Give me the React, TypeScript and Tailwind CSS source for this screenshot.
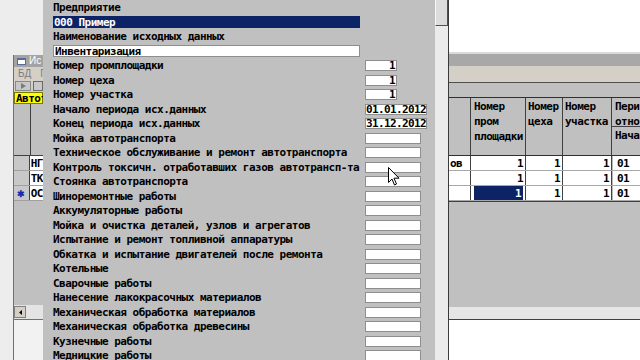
import React from "react";

const mono =
  "font-['DejaVu_Sans_Mono',monospace] font-bold text-[11px] tracking-[-0.5px] leading-none";

type Row = { label: string; value?: string; kind: "s" | "d" | "e" };

const rows: Row[] = [
  { label: "Номер промплощадки", value: "1", kind: "s" },
  { label: "Номер цеха", value: "1", kind: "s" },
  { label: "Номер участка", value: "1", kind: "s" },
  { label: "Начало периода исх.данных", value: "01.01.2012", kind: "d" },
  { label: "Конец периода исх.данных", value: "31.12.2012", kind: "d" },
  { label: "Мойка автотранспорта", kind: "e" },
  { label: "Техническое обслуживание и ремонт автотранспорта", kind: "e" },
  { label: "Контроль токсичн. отработавших газов автотрансп-та", kind: "e" },
  { label: "Стоянка автотранспорта", kind: "e" },
  { label: "Шиноремонтные работы", kind: "e" },
  { label: "Аккумуляторные работы", kind: "e" },
  { label: "Мойка и очистка деталей, узлов и агрегатов", kind: "e" },
  { label: "Испытание и ремонт топливной аппаратуры", kind: "e" },
  { label: "Обкатка и испытание двигателей после ремонта", kind: "e" },
  { label: "Котельные", kind: "e" },
  { label: "Сварочные работы", kind: "e" },
  { label: "Нанесение лакокрасочных материалов", kind: "e" },
  { label: "Механическая обработка материалов", kind: "e" },
  { label: "Механическая обработка древесины", kind: "e" },
  { label: "Кузнечные работы", kind: "e" },
  { label: "Медницкие работы", kind: "e" },
];

function Field({ row }: { row: Row }) {
  const w = row.kind === "s" ? "w-[32px]" : row.kind === "d" ? "w-[62px]" : "w-[56px]";
  return (
    <div
      className={`${w} h-[11px] shrink-0 bg-white border border-[#8e8e8e] flex items-center ${
        row.kind === "d" ? "justify-center tracking-[-0.6px]" : "justify-end pr-[1px]"
      }`}
    >
      {row.value}
    </div>
  );
}

function LeftWindow() {
  return (
    <div className="w-[43px] shrink-0 bg-[#ededed] flex flex-col">
      <div className="h-[55px] shrink-0" />
      <div className="ml-[13px] flex-1 flex flex-col border-l border-[#707070] overflow-hidden">
        <div className="h-[12px] shrink-0 bg-[#a3a3a3] flex items-center gap-[3px] pl-[3px]">
          <div className="w-[9px] h-[7px] shrink-0 bg-white border border-[#5a6a9a] border-t-2" />
          <span className="text-white text-[10px] font-['Liberation_Sans',sans-serif] leading-none">
            Ис
          </span>
        </div>
        <div className="h-[13px] shrink-0 bg-[#d4d0c8] flex items-center gap-[9px] pl-[4px] text-[#7c7c7c] text-[10px] font-['Liberation_Sans',sans-serif] leading-none">
          <span>БД</span>
          <span>П</span>
        </div>
        <div className="h-[12px] shrink-0 bg-[#d4d0c8] flex items-center gap-[2px] pl-[1px]">
          <div className="w-[16px] h-[10px] bg-[#c8c8c8] border border-[#8a8a8a] flex items-center justify-center">
            <svg width="5" height="6" viewBox="0 0 5 6">
              <path d="M0 0 L5 3 L0 6 Z" fill="#7a7a7a" />
            </svg>
          </div>
          <div className="w-[10px] h-[10px] bg-[#c8c8c8] border border-[#6a6a6a]" />
        </div>
        <div
          className={`h-[12px] shrink-0 bg-[#ffff00] border border-[#7a7a00] flex items-center pl-[1px] whitespace-nowrap ${mono}`}
        >
          Автот
        </div>
        <div className="flex-1 bg-[#c0c0c0] flex flex-col">
          <div className="h-[52px] shrink-0 flex border-b border-[#404040]">
            <div className="w-[17px] border-r border-[#404040]" />
          </div>
          {["НГ", "ТК", "ОС"].map((t, i) => (
            <div key={t} className="h-[15px] shrink-0 flex border-b border-[#a0a0a0]">
              <div className="w-[17px] bg-[#c8c8c8] border-r border-[#404040] flex items-center justify-center">
                {i === 2 && <span className="text-[#1a2ab0] text-[9px] leading-none font-bold">✱</span>}
              </div>
              <div className={`flex-1 bg-white flex items-center pl-[1px] whitespace-nowrap ${mono}`}>{t}</div>
            </div>
          ))}
          <div className="flex-1" />
          <div className="h-[14px] shrink-0 bg-[#e4e4e4] flex items-center">
            <div className="w-[12px] h-[12px] bg-[#d4d0c8] border border-[#808080] flex items-center justify-center">
              <svg width="3" height="5" viewBox="0 0 3 5">
                <path d="M3 0 L0 2.5 L3 5 Z" fill="#000" />
              </svg>
            </div>
          </div>
        </div>
        <div className="h-[41px] shrink-0 bg-[#f2f2f2] border-t border-[#707070]" />
      </div>
    </div>
  );
}

function Panel() {
  return (
    <div className={`w-[392px] shrink-0 bg-[#c0c0c0] pl-[10px] flex flex-col text-black ${mono}`}>
      <div className="h-[15px] shrink-0 flex items-center">Предприятие</div>
      <div className="mt-[1px] h-[12px] shrink-0 w-[307px] bg-[#0c2466] text-white flex items-center pl-[1px]">
        000 Пример
      </div>
      <div className="h-[17px] shrink-0 flex items-center">Наименование исходных данных</div>
      <div className="h-[12px] shrink-0 w-[307px] bg-white border border-[#8e8e8e] flex items-center pl-[1px]">
        Инвентаризация
      </div>
      <div className="h-[1.5px] shrink-0" />
      {rows.map((r) => (
        <div key={r.label} className="h-[14.5px] shrink-0 flex items-center">
          <div className="w-[312px] shrink-0 whitespace-nowrap">{r.label}</div>
          <Field row={r} />
        </div>
      ))}
    </div>
  );
}

function Scrollbar() {
  return (
    <div className="w-[13px] shrink-0 bg-[#ebebeb] flex flex-col">
      <div className="h-[26px] shrink-0 bg-[#dcdcdc] border-r border-b border-[#505050] border-l border-l-[#f8f8f8]" />
    </div>
  );
}

const cols = ["w-[22px]", "w-[55px]", "w-[37px]", "w-[49px]"];

function RightWindow() {
  const data = [
    ["ов", "1", "1", "1", "01"],
    ["", "1", "1", "1", "01"],
    ["", "1", "1", "1", "01"],
  ];
  return (
    <div className={`flex-1 flex flex-col border-l border-[#3a3a3a] ${mono}`}>
      <div className="h-[52px] shrink-0 bg-white" />
      <div className="h-[2px] shrink-0 bg-[#dadada]" />
      <div className="h-[12px] shrink-0 bg-[#a8a8a8]" />
      <div className="h-[16px] shrink-0 bg-[#d4d0c8]" />
      <div className="h-[1px] shrink-0 bg-[#505050]" />
      <div className="h-[14px] shrink-0 bg-[#c0c0c0]" />
      <div className="h-[59px] shrink-0 bg-[#c0c0c0] flex border-y border-[#303030]">
        <div className={`${cols[0]} shrink-0 border-r border-[#404040]`} />
        <div className={`${cols[1]} shrink-0 border-r border-[#404040] pl-[3px] pt-[3px] flex flex-col gap-[4px]`}>
          <span>Номер</span>
          <span>пром</span>
          <span>площадки</span>
        </div>
        <div className={`${cols[2]} shrink-0 border-r border-[#404040] pl-[2px] pt-[3px] flex flex-col gap-[4px]`}>
          <span>Номер</span>
          <span>цеха</span>
        </div>
        <div className={`${cols[3]} shrink-0 border-r border-[#404040] pl-[2px] pt-[3px] flex flex-col gap-[4px]`}>
          <span>Номер</span>
          <span>участка</span>
        </div>
        <div className="flex-1 flex flex-col whitespace-nowrap overflow-hidden">
          <div className="h-[29px] border-b border-[#404040] pl-[3px] pt-[3px] flex flex-col gap-[4px]">
            <span>Пери</span>
            <span>отно</span>
          </div>
          <div className="pl-[3px] pt-[3px]">Нача</div>
        </div>
      </div>
      {data.map((r, i) => (
        <div key={i} className="h-[15px] shrink-0 bg-[#b8b8b8] flex border-b border-[#a8a8a8]">
          {r.map((v, j) => {
            const sel = i === 2 && j === 1;
            if (j === 4)
              return (
                <div key={j} className="flex-1 bg-white ml-[1px] flex items-center pl-[4px] overflow-hidden">
                  {v}
                </div>
              );
            return (
              <div key={j} className={`${cols[j]} shrink-0 border-r border-[#404040] bg-white flex items-center`}>
                {j === 0 ? (
                  <span className="pl-[1px]">{v}</span>
                ) : (
                  <div
                    className={`flex-1 h-full flex items-center justify-end pr-[2px] ${
                      sel ? "bg-[#0c2466] text-white m-[1px] ml-[3px] mr-[2px]" : ""
                    }`}
                  >
                    {v}
                  </div>
                )}
              </div>
            );
          })}
        </div>
      ))}
      <div className="flex-1 bg-[#c0c0c0] border-t border-[#404040]" />
      <div className="h-[12px] shrink-0 bg-[#e6e6e6]" />
      <div className="h-[41px] shrink-0 bg-white border-t border-[#404040]" />
    </div>
  );
}

export default function App() {
  return (
    <div className="relative w-[640px] h-[360px] overflow-hidden flex bg-[#ededed]">
      <LeftWindow />
      <Panel />
      <Scrollbar />
      <RightWindow />
      <svg className="absolute left-[388px] top-[167px]" width="12" height="19" viewBox="0 0 12 19">
        <path
          d="M0.5 0.5 L0.5 15.5 L4 12 L6.5 18 L8.5 17 L6 11.2 L11 11.2 Z"
          fill="white"
          stroke="black"
          strokeWidth="1"
          strokeLinejoin="miter"
        />
      </svg>
    </div>
  );
}
